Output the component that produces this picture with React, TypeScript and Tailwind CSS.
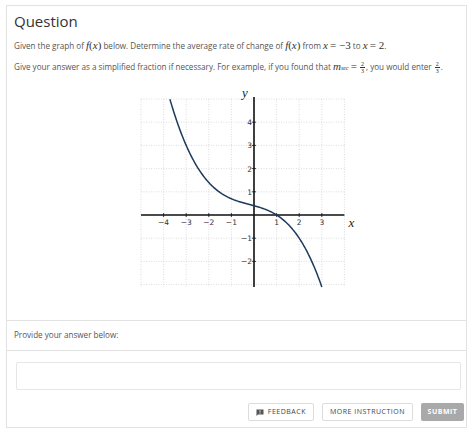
import React from "react";

const OX = 123; // y-axis x in svg coords
const OY = 136; // x-axis y in svg coords
const UX = 22.6;
const UY = 23.2;
const sx = (x: number) => OX + x * UX;
const sy = (y: number) => OY - y * UY;

const f = (x: number) => -0.0833 * x ** 3 - 0.05 * x * x - 0.2667 * x + 0.4;

function curvePath() {
  const pts: string[] = [];
  for (let x = -3.72; x <= 3.02; x += 0.04) {
    pts.push(`${sx(x).toFixed(2)},${sy(f(x)).toFixed(2)}`);
  }
  return "M" + pts.join(" L");
}

function Graph() {
  const xs = [-5, -4, -3, -2, -1, 0, 1, 2, 3, 4];
  const ys = [-3, -2, -1, 0, 1, 2, 3, 4, 5];
  const top = sy(5);
  const bottom = sy(-3.1);
  const left = sx(-5);
  const right = sx(4);
  return (
    <svg width="230" height="212" viewBox="0 0 230 212" className="block ml-[117px] mt-[4px]">
      {xs.map((x) => (
        <line key={"vx" + x} x1={sx(x)} y1={top} x2={sx(x)} y2={bottom} stroke="#d4d4d4" strokeWidth="0.8" strokeDasharray="1 1.5" />
      ))}
      {ys.map((y) => (
        <line key={"hy" + y} x1={left} y1={sy(y)} x2={right} y2={sy(y)} stroke="#d4d4d4" strokeWidth="0.8" strokeDasharray="1 1.5" />
      ))}
      <line x1={left} y1={OY} x2={right} y2={OY} stroke="#111" strokeWidth="1.6" />
      <line x1={OX} y1={top - 2} x2={OX} y2={bottom} stroke="#111" strokeWidth="1.6" />
      {[-4, -3, -2, -1, 1, 2, 3].map((x) => (
        <g key={"tx" + x}>
          <line x1={sx(x)} y1={OY - 2} x2={sx(x)} y2={OY + 2} stroke="#111" strokeWidth="0.8" />
          <text x={sx(x)} y={OY + 10} fontSize="7.5" textAnchor="middle" fill="#333" fontFamily="'DejaVu Sans', sans-serif">
            {x < 0 ? "\u2212" + Math.abs(x) : x}
          </text>
        </g>
      ))}
      {[-2, -1, 1, 2, 3, 4].map((y) => (
        <g key={"ty" + y}>
          <line x1={OX - 2} y1={sy(y)} x2={OX + 2} y2={sy(y)} stroke="#111" strokeWidth="0.8" />
          <text x={OX - 2} y={sy(y) + 3} fontSize="7.5" textAnchor="end" fill="#333" fontFamily="'DejaVu Sans', sans-serif">
            {y < 0 ? "\u2212" + Math.abs(y) : y}
          </text>
        </g>
      ))}
      <text x={OX - 12} y={top - 2} fontSize="13" fontStyle="italic" fill="#222" fontFamily="'Liberation Serif', serif">y</text>
      <text x={sx(4) + 4} y={OY + 12} fontSize="13" fontStyle="italic" fill="#222" fontFamily="'Liberation Serif', serif">x</text>
      <path d={curvePath()} fill="none" stroke="#1d3a5c" strokeWidth="1.5" />
    </svg>
  );
}

const M = ({ children }: { children: React.ReactNode }) => (
  <span className="font-['Liberation_Serif',serif] italic text-[11px] text-[#333]">{children}</span>
);
const N = ({ children }: { children: React.ReactNode }) => (
  <span className="font-['Liberation_Serif',serif] text-[11px] text-[#333]">{children}</span>
);

function Frac() {
  return (
    <span className="inline-flex flex-col items-center align-middle leading-none font-['Liberation_Serif',serif] text-[6px] text-[#333] mx-[1px]">
      <span className="border-b border-[#333] px-[1px]">2</span>
      <span>3</span>
    </span>
  );
}

export default function App() {
  return (
    <div className="w-[474px] h-[434px] bg-white pt-[5px] pl-[6px] font-['Open_Sans',sans-serif]">
      <div className="w-[461px] h-[423px] border border-[#e2e2e2] flex flex-col">
        <div className="h-[315px] border-b border-[#e2e2e2] px-[7px] pt-[6px]">
          <h2 className="text-[15px] leading-[18px] text-[#333]">Question</h2>
          <p className="mt-[8px] text-[8.1px] leading-[14px] text-[#555] whitespace-nowrap">
            Given the graph of <M>f</M>
            <N>(</N>
            <M>x</M>
            <N>)</N> below. Determine the average rate of change of <M>f</M>
            <N>(</N>
            <M>x</M>
            <N>)</N> from <M>x</M> <N>= −3</N> to <M>x</M> <N>= 2</N>.
          </p>
          <p className="mt-[6px] text-[8.1px] leading-[14px] text-[#555] whitespace-nowrap">
            Give your answer as a simplified fraction if necessary. For example, if you found that{" "}
            <M>m</M>
            <span className="font-['Liberation_Serif',serif] italic text-[6px] text-[#333]">sec</span> <N>=</N> <Frac />, you would
            enter <Frac />.
          </p>
          <Graph />
        </div>
        <div className="h-[30px] border-b border-[#e2e2e2] px-[7px] flex items-center text-[8.1px] text-[#555]">
          Provide your answer below:
        </div>
        <div className="pl-[9px] pr-[2px] pt-[11px]">
          <div className="h-[28px] mr-[3px] border border-[#e6e6e6] rounded-[2px]" />
          <div className="flex justify-end gap-[8px] mt-[13px]">
            <button className="h-[18px] px-[7px] border border-[#dcdcdc] rounded-[2px] bg-white flex items-center gap-[4px] text-[7px] tracking-[0.5px] text-[#444]">
              <svg width="8" height="7" viewBox="0 0 8 7">
                <path d="M0.5 0.5h7v5h-5.5l-1.5 1.5z" fill="#555" />
                <rect x="3.6" y="1.3" width="0.8" height="2.2" fill="#fff" />
                <rect x="3.6" y="4" width="0.8" height="0.8" fill="#fff" />
              </svg>
              FEEDBACK
            </button>
            <button className="h-[18px] px-[7px] border border-[#dcdcdc] rounded-[2px] bg-white text-[7px] tracking-[0.5px] text-[#444]">
              MORE INSTRUCTION
            </button>
            <button className="h-[18px] w-[43px] rounded-[2px] bg-[#a9a9a9] text-[7px] font-bold tracking-[0.5px] text-white">
              SUBMIT
            </button>
          </div>
        </div>
      </div>
    </div>
  );
}
